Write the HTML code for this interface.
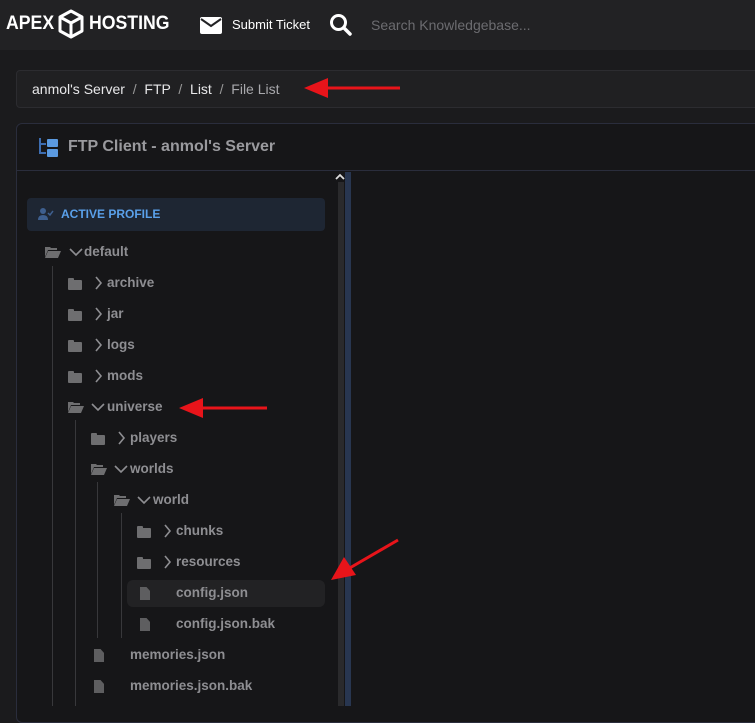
<!DOCTYPE html>
<html><head><style>
*{margin:0;padding:0;box-sizing:border-box}
body{width:755px;height:706px;overflow:hidden;background:#1b1b1d;font-family:"Liberation Sans",sans-serif;position:relative}
.hdr{position:absolute;left:0;top:0;width:755px;height:50px;background:#222224}
.abs{position:absolute}
.bc{position:absolute;left:16px;top:70px;width:760px;height:38px;background:#202022;border:1px solid #2c2c30;border-radius:4px}
.card{position:absolute;left:16px;top:123px;width:760px;height:600px;background:#161618;border:1px solid #2a2d3c;border-radius:6px}
.row{position:absolute;font-size:13.5px;font-weight:bold;color:#8e8e92;height:20px;line-height:20px}
.fold{position:absolute;width:14px;height:10px;background:#6e6e70;border-radius:1px}
.fold:before{content:"";position:absolute;left:0;top:-2px;width:6px;height:3px;background:#6e6e70;border-radius:1px 1px 0 0}
.file{position:absolute;width:10px;height:13px;background:#5e5e60;clip-path:polygon(0 0,65% 0,100% 30%,100% 100%,0 100%)}
.vl{position:absolute;width:1px;background:#38383b}
.cr,.cd{position:absolute}
</style></head><body>
<div class="hdr">
 <div class="abs" style="left:6px;top:13px;color:#fff;font-weight:900;font-size:19px;transform:scaleX(0.93);transform-origin:left">APEX</div>
 <svg class="abs" style="left:57px;top:9px" width="28" height="30" viewBox="0 0 28 30"><path d="M14 2 L25 8 V22 L14 28 L3 22 V8 Z M3 8 L14 14 L25 8 M14 14 V28" fill="none" stroke="#fff" stroke-width="3" stroke-linejoin="round"/></svg>
 <div class="abs" style="left:89px;top:13px;color:#fff;font-weight:900;font-size:19px;transform:scaleX(0.93);transform-origin:left">HOSTING</div>
 <svg class="abs" style="left:200px;top:17px" width="22" height="17" viewBox="0 0 22 17"><rect x="0" y="0" width="22" height="17" rx="2" fill="#fff"/><path d="M1 2 L11 9 L21 2" fill="none" stroke="#222224" stroke-width="2"/></svg>
 <div class="abs" style="left:232px;top:17px;color:#fff;font-size:13px">Submit Ticket</div>
 <svg class="abs" style="left:329px;top:13px" width="23" height="23" viewBox="0 0 23 23"><circle cx="9.5" cy="9.5" r="7" fill="none" stroke="#fff" stroke-width="3"/><path d="M15 15 L21 21" stroke="#fff" stroke-width="3.5" stroke-linecap="round"/></svg>
 <div class="abs" style="left:371px;top:17px;color:#6c6c70;font-size:14px">Search Knowledgebase...</div>
</div>
<div class="bc"><div class="abs" style="left:15px;top:10px;font-size:14px;color:#e8e8ea;white-space:pre">anmol's Server  <span style="color:#999">/</span>  FTP  <span style="color:#999">/</span>  List  <span style="color:#999">/</span>  <span style="color:#a8a8ac">File List</span></div></div>
<div class="card">
 <div class="abs" style="left:0;top:0;width:760px;height:47px;border-bottom:1px solid #2a2d3c"></div>
 <svg class="abs" style="left:20px;top:12px" width="22" height="22" viewBox="0 0 22 22"><path d="M3 2 V17 H9 M3 8 H9" fill="none" stroke="#3d6db0" stroke-width="2"/><rect x="10" y="3" width="11" height="8" rx="1" fill="#5b9ae0"/><rect x="10" y="13" width="11" height="8" rx="1" fill="#5b9ae0"/></svg>
 <div class="abs" style="left:51px;top:14px;font-size:16px;font-weight:bold;color:#9a9a9e">FTP Client - anmol's Server</div>
</div>
<div class="abs" style="left:338px;top:182px;width:6px;height:524px;background:#2a2a2c"></div>
<svg class="abs" style="left:335px;top:173px" width="10" height="7" viewBox="0 0 10 7"><path d="M1 6 L5 2 L9 6" fill="none" stroke="#ddd" stroke-width="1.8"/></svg>
<div class="abs" style="left:345px;top:172px;width:6px;height:534px;background:#283650"></div>
<div class="abs" style="left:27px;top:198px;width:298px;height:33px;background:#1e2633;border-radius:4px"></div>
<svg class="abs" style="left:38px;top:207px" width="16" height="14" viewBox="0 0 16 14"><circle cx="5" cy="4" r="3" fill="#3e5f8f"/><path d="M0 13 Q0 8 5 8 Q10 8 10 13Z" fill="#3e5f8f"/><path d="M10 6 L12 8 L15 4" fill="none" stroke="#3e5f8f" stroke-width="1.5"/></svg>
<div class="abs" style="left:61px;top:207px;font-size:12px;font-weight:bold;color:#5aa0ea">ACTIVE PROFILE</div>
<div class="abs" style="left:127px;top:580px;width:198px;height:27px;background:#222224;border-radius:6px"></div>
<div class="vl" style="left:52px;top:266px;height:440px"></div>
<div class="vl" style="left:75px;top:420px;height:286px"></div>
<div class="vl" style="left:97px;top:482px;height:156px"></div>
<div class="vl" style="left:121px;top:513px;height:125px"></div>
<svg class="abs" style="left:0;top:0" width="755" height="706">
<defs>
<path id="of" d="M0 1 H5 L6 2 H12 V4 H3 L0 11Z M3 5 H16 L13 12 H0Z" fill="#6e6e70"/>
<path id="cr" d="M0 0 L5 6 L0 12" fill="none" stroke="#8e8e92" stroke-width="1.6"/>
<path id="cd" d="M0 0 L6 6 L12 0" fill="none" stroke="#8e8e92" stroke-width="1.6"/>
</defs>
<use href="#of" x="45" y="246"/><use href="#cd" x="70" y="249"/>
<use href="#cr" x="96" y="277"/><use href="#cr" x="96" y="308"/><use href="#cr" x="96" y="339"/><use href="#cr" x="96" y="370"/>
<use href="#of" x="68" y="401"/><use href="#cd" x="92" y="404"/>
<use href="#cr" x="119" y="432"/>
<use href="#of" x="91" y="463"/><use href="#cd" x="115" y="466"/>
<use href="#of" x="114" y="494"/><use href="#cd" x="138" y="497"/>
<use href="#cr" x="165" y="525"/><use href="#cr" x="165" y="556"/>
</svg>
<div class="row" style="left:84px;top:242px">default</div>
<div class="fold" style="left:68px;top:280px"></div><div class="row" style="left:107px;top:273px">archive</div>
<div class="fold" style="left:68px;top:311px"></div><div class="row" style="left:107px;top:304px">jar</div>
<div class="fold" style="left:68px;top:342px"></div><div class="row" style="left:107px;top:335px">logs</div>
<div class="fold" style="left:68px;top:373px"></div><div class="row" style="left:107px;top:366px">mods</div>
<div class="row" style="left:107px;top:397px">universe</div>
<div class="fold" style="left:91px;top:435px"></div><div class="row" style="left:130px;top:428px">players</div>
<div class="row" style="left:130px;top:459px">worlds</div>
<div class="row" style="left:153px;top:490px">world</div>
<div class="fold" style="left:137px;top:528px"></div><div class="row" style="left:176px;top:521px">chunks</div>
<div class="fold" style="left:137px;top:559px"></div><div class="row" style="left:176px;top:552px">resources</div>
<div class="file" style="left:140px;top:587px"></div><div class="row" style="left:176px;top:583px">config.json</div>
<div class="file" style="left:140px;top:618px"></div><div class="row" style="left:176px;top:614px">config.json.bak</div>
<div class="file" style="left:94px;top:649px"></div><div class="row" style="left:130px;top:645px">memories.json</div>
<div class="file" style="left:94px;top:680px"></div><div class="row" style="left:130px;top:676px">memories.json.bak</div>
<svg class="abs" style="left:0;top:0" width="755" height="706">
<g fill="#e8141a" stroke="#e8141a">
<line x1="400" y1="88" x2="320" y2="88" stroke-width="3"/><polygon points="304,88 328,78 328,98" stroke="none"/>
<line x1="267" y1="408" x2="195" y2="408" stroke-width="3"/><polygon points="179,408 203,398 203,418" stroke="none"/>
<line x1="398" y1="540" x2="348" y2="569" stroke-width="3"/><polygon points="331,580 344,557 356,575" stroke="none"/>
</g></svg>
</body></html>
